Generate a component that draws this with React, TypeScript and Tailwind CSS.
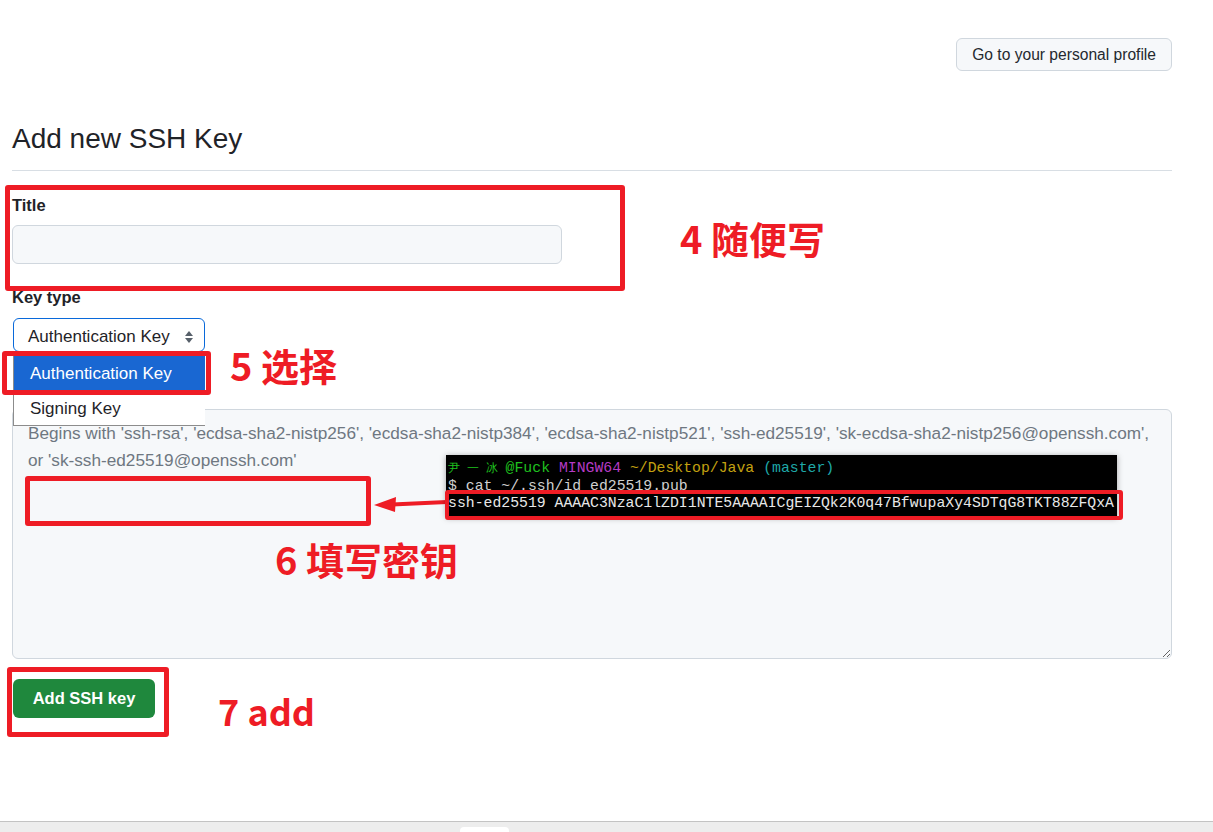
import React from 'react';

const ui = 'font-["Liberation_Sans",Arial,sans-serif]';
const cjk = 'font-["Noto_Sans_CJK_SC","Liberation_Sans",sans-serif]';

// red markup drawn over the screenshot
const Note: React.FC<{ className: string; children: React.ReactNode }> = ({ className, children }) => (
  <div className={`absolute ${cjk} font-bold leading-none text-[#ee1c25] whitespace-nowrap ${className}`}>
    {children}
  </div>
);

const Box: React.FC<{ className: string }> = ({ className }) => (
  <div className={`absolute border-[5px] border-[#ee1c25] rounded-[3px] pointer-events-none ${className}`} />
);

const App: React.FC = () => {
  return (
    <div className={`relative h-[832px] overflow-hidden bg-white text-[#1f2328] ${ui}`}>
      <div className="px-3 pt-[38px] w-[1184px]">
        {/* Header */}
        <div className="flex justify-end">
          <button className="h-[33px] px-[15px] rounded-md border border-[#d0d7de] bg-[#f6f8fa] text-[15.6px] text-[#24292f]">
            Go to your personal profile
          </button>
        </div>

        <h1 className="mt-[47px] pb-[10px] border-b border-[#d8dee4] text-[28px] leading-[42px] font-normal">
          Add new SSH Key
        </h1>

        {/* Title */}
        <div className="relative">
          <label className="block mt-[24px] text-[16.5px] leading-[21px] font-bold">Title</label>
          <input className="mt-[9px] block w-[550px] h-[39px] rounded-md border border-[#d0d7de] bg-[#f6f8fa] px-3 outline-none" />
          <Box className="-left-[7px] -top-[10px] w-[620px] h-[106px]" />
          <Note className="left-[668px] top-[24px] text-[38px]">4 随便写</Note>
        </div>

        {/* Key type */}
        <label className="block mt-[23px] text-[16.5px] leading-[21px] font-bold">Key type</label>
        <div className="relative mt-[10px] ml-px w-[192px]">
          <div className="h-[34px] flex items-center justify-between rounded-md border border-[#0969da] pl-[14px] pr-[10px] pt-[3px] text-[17px]">
            <span>Authentication Key</span>
            <svg width="10" height="14" viewBox="0 0 10 14" fill="#57606a">
              <path d="M5 1 L9 6 H1 Z" />
              <path d="M5 13 L9 8 H1 Z" />
            </svg>
          </div>
          <div className="absolute left-0 top-[34px] z-20 w-[192px] bg-white border-l border-b border-[#8c8c8c] text-[17px] pt-[3px]">
            <div className="h-[38px] flex items-center pl-[16px] bg-[#1967d2] text-white">Authentication Key</div>
            <div className="h-[32px] flex items-center pl-[16px] text-[#1f2328]">Signing Key</div>
          </div>
          <Box className="-left-[11px] top-[33px] w-[209px] h-[44px] z-30" />
          <Note className="left-[217px] top-[28px] text-[38px]">5 选择</Note>
        </div>

        {/* Key (label hidden under the open dropdown) */}
        <div className="mt-[23px] h-[21px]" />
        <div className="relative mt-[13px]">
          <textarea
            className="block w-full h-[250px] rounded-md border border-[#d0d7de] bg-[#f6f8fa] px-[15px] pt-[10px] text-[17.2px] leading-[27px] outline-none placeholder:text-[#6e7781]"
            placeholder={"Begins with 'ssh-rsa', 'ecdsa-sha2-nistp256', 'ecdsa-sha2-nistp384', 'ecdsa-sha2-nistp521', 'ssh-ed25519', 'sk-ecdsa-sha2-nistp256@openssh.com',\nor 'sk-ssh-ed25519@openssh.com'"}
          />
          <Box className="left-[13px] top-[67px] w-[346px] h-[50px]" />
          <svg className="absolute left-[360px] top-[85px]" width="76" height="20" viewBox="0 0 76 20">
            <path d="M75 8 L20 10.5" stroke="#ee1c25" strokeWidth="4" fill="none" />
            <path d="M2 11 L24 3 L23 18 Z" fill="#ee1c25" />
          </svg>

          {/* terminal capture */}
          <div className="absolute left-[434px] top-[46px] w-[671px] h-[62px] bg-black shadow-[0_1px_6px_rgba(0,0,0,0.35)] overflow-hidden font-['Liberation_Mono',monospace] text-[14.8px] leading-[17px] pt-[5px] pl-[2px] whitespace-nowrap">
            <div>
              <span className="text-[#1fc01f] text-[12px]">尹 一 冰 </span>
              <span className="text-[#1fc01f]">@Fuck </span>
              <span className="text-[#b53bc4]">MINGW64 </span>
              <span className="text-[#c3a010]">~/Desktop/Java </span>
              <span className="text-[#1fa8a8]">(master)</span>
            </div>
            <div className="text-[#d0d0d0]">$ cat ~/.ssh/id_ed25519.pub</div>
            <div className="text-[#e8e8e8]">ssh-ed25519 AAAAC3NzaC1lZDI1NTE5AAAAICgEIZQk2K0q47BfwupaXy4SDTqG8TKT88ZFQxA</div>
          </div>
          <div className="absolute left-[433px] top-[81px] w-[678px] h-[30px] border-[4px] border-[#ee1c25] rounded-[3px]" />

          <Note className="left-[263px] top-[131px] text-[38px]">6 填写密钥</Note>
        </div>

        <div className="relative mt-[20px] ml-px w-fit">
          <button className="h-[39px] w-[142px] rounded-md bg-[#1f883d] text-white text-[16.5px] font-bold">
            Add SSH key
          </button>
          <Box className="-left-[6px] -top-[12px] w-[162px] h-[70px]" />
          <Note className="left-[205px] top-[13px] text-[36px]">7 add</Note>
        </div>
      </div>

      {/* window bottom edge */}
      <div className="absolute left-0 right-0 bottom-0 h-[11px] bg-[#ededed] border-t border-[#c3c3c3]">
        <div className="absolute left-[460px] top-[5px] w-[49px] h-[8px] rounded-t-[4px] bg-white" />
      </div>
    </div>
  );
};

export default App;
